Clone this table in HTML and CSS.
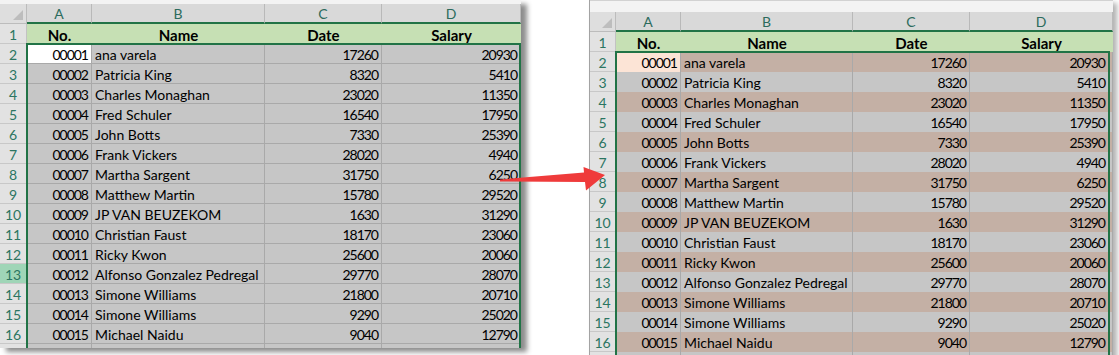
FILE: index.html
```html
<!DOCTYPE html>
<html lang="en">
<head>
<meta charset="utf-8">
<title>Alternate row shading</title>
<link rel="stylesheet" href="styles.css">
</head>
<body>
<div class="page">
  <section class="sheet sheet-left">
    <div class="topstrip"></div>
    <div class="row hdr">
      <div class="corner"><svg width="10" height="10" viewBox="0 0 10 10"><polygon points="10,0 10,10 0,10" fill="#bdbdbd"/></svg></div>
      <div class="ch">A</div><div class="ch">B</div><div class="ch">C</div><div class="ch">D</div>
    </div>
    <div class="row title">
      <div class="rh">1</div><div class="t">No.</div><div class="t">Name</div><div class="t">Date</div><div class="t">Salary</div>
    </div>
    <div class="body">
      <div class="sel"></div>
      <div class="row"><div class="rh">2</div><div class="c num active">00001</div><div class="c">ana varela</div><div class="c num">17260</div><div class="c num last">20930</div></div>
      <div class="row"><div class="rh">3</div><div class="c num">00002</div><div class="c">Patricia King</div><div class="c num">8320</div><div class="c num last">5410</div></div>
      <div class="row"><div class="rh">4</div><div class="c num">00003</div><div class="c">Charles Monaghan</div><div class="c num">23020</div><div class="c num last">11350</div></div>
      <div class="row"><div class="rh">5</div><div class="c num">00004</div><div class="c">Fred Schuler</div><div class="c num">16540</div><div class="c num last">17950</div></div>
      <div class="row"><div class="rh">6</div><div class="c num">00005</div><div class="c">John Botts</div><div class="c num">7330</div><div class="c num last">25390</div></div>
      <div class="row"><div class="rh">7</div><div class="c num">00006</div><div class="c">Frank Vickers</div><div class="c num">28020</div><div class="c num last">4940</div></div>
      <div class="row"><div class="rh">8</div><div class="c num">00007</div><div class="c">Martha Sargent</div><div class="c num">31750</div><div class="c num last">6250</div></div>
      <div class="row"><div class="rh">9</div><div class="c num">00008</div><div class="c">Matthew Martin</div><div class="c num">15780</div><div class="c num last">29520</div></div>
      <div class="row"><div class="rh">10</div><div class="c num">00009</div><div class="c">JP VAN BEUZEKOM</div><div class="c num">1630</div><div class="c num last">31290</div></div>
      <div class="row"><div class="rh">11</div><div class="c num">00010</div><div class="c">Christian Faust</div><div class="c num">18170</div><div class="c num last">23060</div></div>
      <div class="row"><div class="rh">12</div><div class="c num">00011</div><div class="c">Ricky Kwon</div><div class="c num">25600</div><div class="c num last">20060</div></div>
      <div class="row"><div class="rh hover">13</div><div class="c num">00012</div><div class="c">Alfonso Gonzalez Pedregal</div><div class="c num">29770</div><div class="c num last">28070</div></div>
      <div class="row"><div class="rh">14</div><div class="c num">00013</div><div class="c">Simone Williams</div><div class="c num">21800</div><div class="c num last">20710</div></div>
      <div class="row"><div class="rh">15</div><div class="c num">00014</div><div class="c">Simone Williams</div><div class="c num">9290</div><div class="c num last">25020</div></div>
      <div class="row"><div class="rh">16</div><div class="c num">00015</div><div class="c">Michael Naidu</div><div class="c num">9040</div><div class="c num last">12790</div></div>
      <div class="row"><div class="rh"></div><div class="c"></div><div class="c"></div><div class="c"></div><div class="c"></div></div>
    </div>
  </section>

  <section class="sheet sheet-right">
    <div class="topstrip"></div>
    <div class="row hdr">
      <div class="corner"><svg width="10" height="10" viewBox="0 0 10 10"><polygon points="10,0 10,10 0,10" fill="#bdbdbd"/></svg></div>
      <div class="ch">A</div><div class="ch">B</div><div class="ch">C</div><div class="ch">D</div>
    </div>
    <div class="row title">
      <div class="rh">1</div><div class="t">No.</div><div class="t">Name</div><div class="t">Date</div><div class="t">Salary</div>
    </div>
    <div class="body">
      <div class="sel"></div>
      <div class="row band-a"><div class="rh">2</div><div class="c num active">00001</div><div class="c">ana varela</div><div class="c num">17260</div><div class="c num last">20930</div></div>
      <div class="row band-b"><div class="rh">3</div><div class="c num">00002</div><div class="c">Patricia King</div><div class="c num">8320</div><div class="c num last">5410</div></div>
      <div class="row band-a"><div class="rh">4</div><div class="c num">00003</div><div class="c">Charles Monaghan</div><div class="c num">23020</div><div class="c num last">11350</div></div>
      <div class="row band-b"><div class="rh">5</div><div class="c num">00004</div><div class="c">Fred Schuler</div><div class="c num">16540</div><div class="c num last">17950</div></div>
      <div class="row band-a"><div class="rh">6</div><div class="c num">00005</div><div class="c">John Botts</div><div class="c num">7330</div><div class="c num last">25390</div></div>
      <div class="row band-b"><div class="rh">7</div><div class="c num">00006</div><div class="c">Frank Vickers</div><div class="c num">28020</div><div class="c num last">4940</div></div>
      <div class="row band-a"><div class="rh">8</div><div class="c num">00007</div><div class="c">Martha Sargent</div><div class="c num">31750</div><div class="c num last">6250</div></div>
      <div class="row band-b"><div class="rh">9</div><div class="c num">00008</div><div class="c">Matthew Martin</div><div class="c num">15780</div><div class="c num last">29520</div></div>
      <div class="row band-a"><div class="rh">10</div><div class="c num">00009</div><div class="c">JP VAN BEUZEKOM</div><div class="c num">1630</div><div class="c num last">31290</div></div>
      <div class="row band-b"><div class="rh">11</div><div class="c num">00010</div><div class="c">Christian Faust</div><div class="c num">18170</div><div class="c num last">23060</div></div>
      <div class="row band-a"><div class="rh">12</div><div class="c num">00011</div><div class="c">Ricky Kwon</div><div class="c num">25600</div><div class="c num last">20060</div></div>
      <div class="row band-b"><div class="rh">13</div><div class="c num">00012</div><div class="c">Alfonso Gonzalez Pedregal</div><div class="c num">29770</div><div class="c num last">28070</div></div>
      <div class="row band-a"><div class="rh">14</div><div class="c num">00013</div><div class="c">Simone Williams</div><div class="c num">21800</div><div class="c num last">20710</div></div>
      <div class="row band-b"><div class="rh">15</div><div class="c num">00014</div><div class="c">Simone Williams</div><div class="c num">9290</div><div class="c num last">25020</div></div>
      <div class="row band-a"><div class="rh">16</div><div class="c num">00015</div><div class="c">Michael Naidu</div><div class="c num">9040</div><div class="c num last">12790</div></div>
      <div class="row band-b"><div class="rh"></div><div class="c"></div><div class="c"></div><div class="c"></div><div class="c"></div></div>
    </div>
  </section>

  <svg class="arrow" width="1119" height="355" viewBox="0 0 1119 355">
    <polygon points="500,179.5 584,172.5 583.5,167 605,175 586,190.5 585,182 500,181.5" fill="#ef3b3b"/>
  </svg>
</div>
</body>
</html>
```

FILE: styles.css
```css
* { box-sizing: border-box; }

html, body {
  margin: 0;
  padding: 0;
  background: #ffffff;
}

body {
  font-family: Lato, "Open Sans", "Liberation Sans", sans-serif;
  font-size: 14px;
  color: #000;
}

.page {
  position: relative;
  display: flex;
  align-items: flex-start;
  width: 1119px;
  height: 355px;
  overflow: hidden;
}

.sheet {
  position: relative;
  display: flex;
  flex-direction: column;
  overflow: hidden;
  background: #fff;
}

.sheet-left {
  width: 521px;
  height: 348px;
  margin-right: 68px;
  box-shadow: 6px 4px 5px rgba(0, 0, 0, 0.45);
}

.sheet-right {
  width: 524px;
  height: 362px;
  border-left: 1px solid #a3a3a3;
  box-shadow: 4px 3px 5px rgba(0, 0, 0, 0.3);
}

.topstrip {
  flex: none;
  background: #f3f3f3;
}

.sheet-left .topstrip { height: 4px; }

.sheet-right .topstrip {
  height: 12px;
  border-top: 1px solid #d2d2d2;
}

.row {
  display: grid;
  height: 20px;
  flex: none;
}

.sheet-left .row { grid-template-columns: 27px 65px 173px 117px 139px; }
.sheet-right .row { grid-template-columns: 26px 65px 172px 117px 143px; }

.row > div {
  height: 20px;
  white-space: nowrap;
  overflow: hidden;
}

/* column header */
.corner {
  display: flex;
  align-items: flex-end;
  justify-content: flex-end;
  padding: 0 3px 3px 0;
  background: #dedede;
  border-right: 1px solid #bcbcbc;
  border-bottom: 1px solid #bcbcbc;
}

.corner svg { display: block; }

.ch {
  background: #d9d9d9;
  border-right: 1px solid #b9b9b9;
  border-bottom: 2px solid #217346;
  color: #2c6b5c;
  text-align: center;
  padding-top: 1px;
  line-height: 18px;
  font-size: 14px;
}

/* row header */
.rh {
  background: #e2e2e2;
  border-right: 1px solid #c2c2c2;
  border-bottom: 1px solid #c8c8c8;
  color: #2b7561;
  text-align: center;
  padding-top: 2px;
  line-height: 18px;
  font-size: 14px;
}

.rh.hover { background: #9fd5b7; }

/* title row */
.t {
  background: #c6e0b4;
  font-weight: 700;
  font-size: 15px;
  text-align: center;
  padding-top: 2px;
  line-height: 18px;
}

/* data cells */
.c {
  padding: 2px 3px 0;
  line-height: 18px;
  background: #c6c6c6;
  border-right: 1px solid #a9a9a9;
}

.sheet-left .c { border-bottom: 1px solid #a9a9a9; }

.c.num {
  text-align: right;
  padding-right: 3px;
  letter-spacing: -1px;
}

.sheet-left .c.num.last { padding-right: 4px; border-right: none; }
.sheet-right .c.num.last { padding-right: 7px; }

.sheet-left .c.active { background: #ffffff; }

.sheet-right .band-a .c { background: #c4b0a5; }
.sheet-right .band-b .c { background: #c6c6c6; }
.sheet-right .band-a .c.active { background: #fce4d6; }

/* selection */
.body {
  position: relative;
  flex: none;
}

.sel {
  position: absolute;
  top: -1px;
  bottom: -10px;
  right: 0;
  border: 2px solid #217346;
  border-bottom: none;
  pointer-events: none;
  z-index: 2;
}

.sheet-left .sel { left: 26px; }
.sheet-right .sel { left: 25px; right: 3px; }

.arrow {
  position: absolute;
  left: 0;
  top: 0;
  pointer-events: none;
  z-index: 5;
}
```
